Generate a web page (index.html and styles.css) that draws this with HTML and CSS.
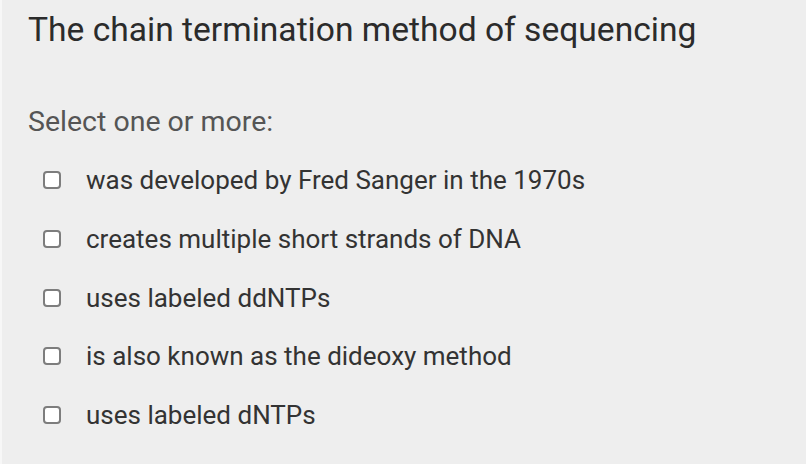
FILE: index.html
```html
<!DOCTYPE html>
<html>
<head>
  <title>Question</title>
  <link rel="stylesheet" href="styles.css">
</head>
<body>
  <div class="question">
    <p class="qtext">The chain termination method of sequencing</p>
    <p class="prompt">Select one or more:</p>
    <div class="answers">
      <label class="option"><input type="checkbox" class="box"><span>was developed by Fred Sanger in the 1970s</span></label>
      <label class="option"><input type="checkbox" class="box"><span>creates multiple short strands of DNA</span></label>
      <label class="option"><input type="checkbox" class="box"><span>uses labeled ddNTPs</span></label>
      <label class="option"><input type="checkbox" class="box"><span>is also known as the dideoxy method</span></label>
      <label class="option"><input type="checkbox" class="box"><span>uses labeled dNTPs</span></label>
    </div>
  </div>
</body>
</html>
```
FILE: styles.css
```css
html, body{
 margin: 0;
 height: 100%;
}
body{
 background-color: #f7f7f7;
 font-family: Roboto, Arial, sans-serif;
 color: #333;
}
.question{
 margin-left: 2px;
 height: 100%;
 background-color: #eeeeee;
 padding: 0 26px;
 overflow: hidden;
}
.qtext{
 margin: 9px 0 0 0;
 font-size: 33.6px;
 line-height: 42px;
 color: #2b2b2b;
}
.prompt{
 margin: 52px 0 0 0;
 font-size: 28.5px;
 line-height: 38px;
 color: #555;
}
.answers{
 display: flex;
 flex-direction: column;
 margin-top: 10px;
}
.option{
 display: flex;
 align-items: center;
 height: 58.7px;
 font-size: 26px;
 color: #333;
}
.box{
 -webkit-appearance: none;
 appearance: none;
 flex: none;
 box-sizing: border-box;
 width: 18px;
 height: 18px;
 margin: 0 25px 0 15px;
 border: 2px solid #7d7d7d;
 border-radius: 4px;
 background-color: #fff;
}
```
